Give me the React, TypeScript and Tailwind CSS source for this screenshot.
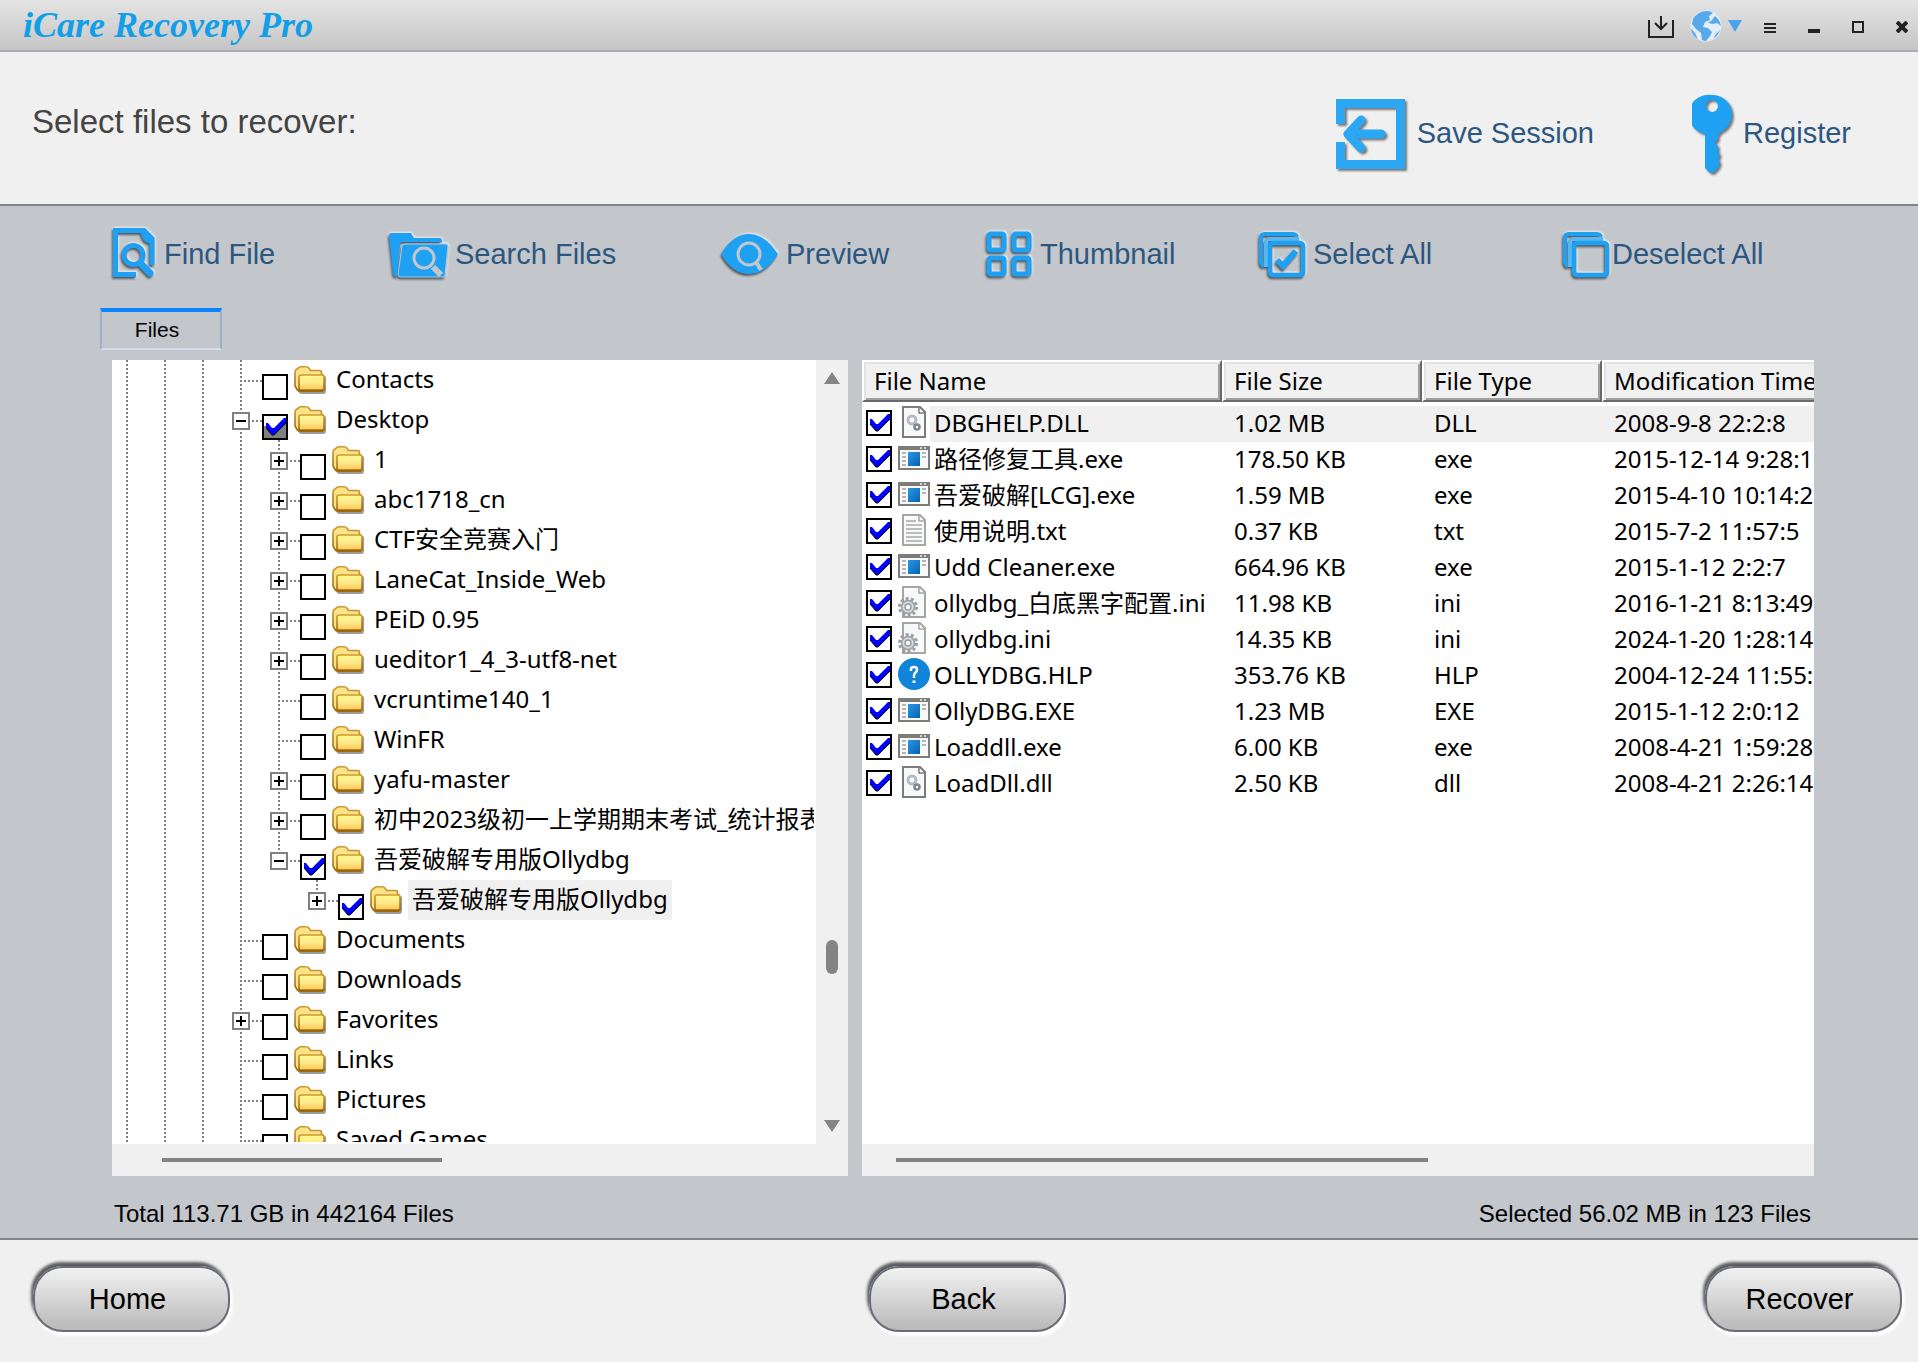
import { ReactNode } from "react";

type TreeNode = {
  name: string;
  depth: number; // 0 = user folder level
  expander?: "+" | "-";
  check?: "on" | "partial";
  last?: boolean; // last child of its parent
  selected?: boolean;
};

const tree: TreeNode[] = [
  { name: "Contacts", depth: 0 },
  { name: "Desktop", depth: 0, expander: "-", check: "partial" },
  { name: "1", depth: 1, expander: "+" },
  { name: "abc1718_cn", depth: 1, expander: "+" },
  { name: "CTF安全竞赛入门", depth: 1, expander: "+" },
  { name: "LaneCat_Inside_Web", depth: 1, expander: "+" },
  { name: "PEiD 0.95", depth: 1, expander: "+" },
  { name: "ueditor1_4_3-utf8-net", depth: 1, expander: "+" },
  { name: "vcruntime140_1", depth: 1 },
  { name: "WinFR", depth: 1 },
  { name: "yafu-master", depth: 1, expander: "+" },
  { name: "初中2023级初一上学期期末考试_统计报表", depth: 1, expander: "+" },
  { name: "吾爱破解专用版Ollydbg", depth: 1, expander: "-", check: "on", last: true },
  { name: "吾爱破解专用版Ollydbg", depth: 2, expander: "+", check: "on", last: true, selected: true },
  { name: "Documents", depth: 0 },
  { name: "Downloads", depth: 0 },
  { name: "Favorites", depth: 0, expander: "+" },
  { name: "Links", depth: 0 },
  { name: "Pictures", depth: 0 },
  { name: "Saved Games", depth: 0 },
];

type FileKind = "dll" | "exe" | "txt" | "ini" | "hlp";

const files: { name: string; size: string; type: string; time: string; kind: FileKind }[] = [
  { name: "DBGHELP.DLL", size: "1.02 MB", type: "DLL", time: "2008-9-8 22:2:8", kind: "dll" },
  { name: "路径修复工具.exe", size: "178.50 KB", type: "exe", time: "2015-12-14 9:28:11", kind: "exe" },
  { name: "吾爱破解[LCG].exe", size: "1.59 MB", type: "exe", time: "2015-4-10 10:14:22", kind: "exe" },
  { name: "使用说明.txt", size: "0.37 KB", type: "txt", time: "2015-7-2 11:57:5", kind: "txt" },
  { name: "Udd Cleaner.exe", size: "664.96 KB", type: "exe", time: "2015-1-12 2:2:7", kind: "exe" },
  { name: "ollydbg_白底黑字配置.ini", size: "11.98 KB", type: "ini", time: "2016-1-21 8:13:49", kind: "ini" },
  { name: "ollydbg.ini", size: "14.35 KB", type: "ini", time: "2024-1-20 1:28:14", kind: "ini" },
  { name: "OLLYDBG.HLP", size: "353.76 KB", type: "HLP", time: "2004-12-24 11:55:10", kind: "hlp" },
  { name: "OllyDBG.EXE", size: "1.23 MB", type: "EXE", time: "2015-1-12 2:0:12", kind: "exe" },
  { name: "Loaddll.exe", size: "6.00 KB", type: "exe", time: "2008-4-21 1:59:28", kind: "exe" },
  { name: "LoadDll.dll", size: "2.50 KB", type: "dll", time: "2008-4-21 2:26:14", kind: "dll" },
];

const BLUE = "#1ea1f3";

const CheckBox = ({ label, state }: { label: string; state?: "on" | "partial" }) => (
  <span className="relative block h-[26px] w-[26px] shrink-0">
    <input
      type="checkbox"
      aria-label={label}
      defaultChecked={!!state}
      className="peer block h-[26px] w-[26px] appearance-none border-2 border-black bg-white"
    />
    <svg
      viewBox="0 0 26 26"
      className="pointer-events-none absolute inset-0 hidden h-[26px] w-[26px] peer-checked:block"
    >
      {state === "partial" && <path d="M2 12h2l7 8 13-12v16H2z" fill="#808080" />}
      <path d="M4 9h2l4 5h2L22 4h2v5L12 21h-2l-6-7z" fill="#00f" />
      <path d="M4 14l6 7h2L24 9" fill="none" stroke="#000" strokeWidth="1" />
    </svg>
  </span>
);

const Folder = () => (
  <svg viewBox="0 0 32 29" className="h-[29px] w-8 shrink-0">
    <defs>
      <linearGradient id="folderFront" x1="0" y1="0" x2="0" y2="1">
        <stop offset="0" stopColor="#fffa90" />
        <stop offset="0.5" stopColor="#ffe98a" />
        <stop offset="1" stopColor="#fbc050" />
      </linearGradient>
      <linearGradient id="folderEdge" x1="0" y1="0" x2="0" y2="1">
        <stop offset="0" stopColor="#cf9a35" />
        <stop offset="1" stopColor="#9a6608" />
      </linearGradient>
    </defs>
    <path d="M4 23h25V9l3 2v14q0 3-3 3H8q-3 0-4-3z" fill="#666" opacity="0.65" />
    <path
      d="M1 20V6q0-2 2-3l2-1.500q1-.7 2-.7h5q2 0 3 1.500l1.500 2.200h9q2 0 2 2V9h1.500v14q0 2-2 2H6q-2 0-3-1.500z"
      fill="#fbe488"
      stroke="url(#folderEdge)"
      strokeWidth="1.600"
    />
    <path
      d="M5 11q0-2 2-2h21q2 0 2 2v12q0 1.500-2 1.500H7q-2 0-2-2z"
      fill="url(#folderFront)"
      stroke="url(#folderEdge)"
      strokeWidth="1.600"
    />
    <path d="M6 24.500h23" stroke="#9a6400" strokeWidth="2" />
  </svg>
);

const FileIcon = ({ kind }: { kind: FileKind }) => {
  if (kind === "exe") {
    return (
      <svg viewBox="0 0 32 32" className="h-8 w-8 shrink-0">
        <defs>
          <linearGradient id="exeBlue" x1="0" y1="0" x2="1" y2="1">
            <stop offset="0" stopColor="#2a9ae4" />
            <stop offset="1" stopColor="#0560b4" />
          </linearGradient>
        </defs>
        <rect x="1" y="5" width="30" height="22" fill="#f8f8f8" stroke="#7c7c78" strokeWidth="2" />
        <path d="M0 6h32" stroke="#7c7c78" strokeWidth="4" />
        <path d="M22 6h2m2 0h2" stroke="#d8d8d8" strokeWidth="2" />
        <rect x="10" y="10" width="12" height="14" fill="url(#exeBlue)" />
        <path d="M4 11h4M4 15h4M4 19h4M4 23h4M24 11h4M24 15h4" stroke="#a0a0a0" strokeWidth="1.500" />
      </svg>
    );
  }
  if (kind === "hlp") {
    return (
      <svg viewBox="0 0 32 32" className="h-8 w-8 shrink-0">
        <circle cx="16" cy="16" r="16" fill="#0f84d8" />
        <path d="M13 13v-2q0-2 3-2t3 2.500q0 2-1.500 3T16 18v2" fill="none" stroke="#fff" strokeWidth="2.500" />
        <path d="M14.500 22.500h3v2.500h-3z" fill="#fff" />
      </svg>
    );
  }
  const edge = kind === "dll" ? "#7c7c78" : "#a6a6a4";
  return (
    <svg viewBox="0 0 32 32" className="h-8 w-8 shrink-0">
      <path d="M5 1h17l5 5v25H5z" fill="#f8f9fa" stroke={edge} strokeWidth="2" />
      <path d="M21 1v6h6" fill="none" stroke={edge} strokeWidth="1.500" />
      {kind === "txt" && (
        <path d="M8 7h10M8 11h16M8 15h16M8 19h16M8 23h16M8 27h16" stroke="#a8a8a8" strokeWidth="1.500" />
      )}
      {kind === "dll" && (
        <g fill="none">
          <circle cx="14" cy="14" r="4" stroke="#b4bcc6" strokeWidth="3" />
          <circle cx="19" cy="21" r="2.500" stroke="#7d8790" strokeWidth="2.500" />
        </g>
      )}
      {kind === "ini" && (
        <g fill="none">
          <circle cx="10" cy="21" r="8.500" stroke="#9a9fa3" strokeWidth="3" strokeDasharray="3 2.340" />
          <circle cx="10" cy="21" r="6.500" fill="#d5d9dc" stroke="#9a9fa3" strokeWidth="1.500" />
          <circle cx="10" cy="21" r="3" fill="#f8f9fa" stroke="#9a9fa3" strokeWidth="1.500" />
        </g>
      )}
    </svg>
  );
};

const Dots = ({ half }: { half?: boolean }) => (
  <span
    className={
      (half ? "h-5 " : "h-10 ") +
      "block w-[2px] bg-[repeating-linear-gradient(to_bottom,#808080_0_2px,transparent_2px_4px)]"
    }
  />
);

const TreeRow = ({ node }: { node: TreeNode }) => {
  // three outer guides, one more for every parent that still has siblings below
  const guides = [true, true, true];
  for (let i = 0; i < node.depth; i++) guides.push(i === 0);

  return (
    <li className="-ml-1 flex h-10 w-max">
      {guides.map((visible, i) => (
        <span key={i} className="flex w-[38px] shrink-0 justify-center">
          {visible && <Dots />}
        </span>
      ))}
      <span className="relative flex w-10 shrink-0 pl-[18px]">
        <Dots half={node.last} />
        <span className="mt-5 h-[2px] flex-1 bg-[repeating-linear-gradient(to_right,transparent_0_2px,#808080_2px_4px)]" />
        {node.expander && (
          <button
            aria-label={node.expander === "+" ? "Expand" : "Collapse"}
            className="absolute top-3 left-[10px] h-[18px] w-[18px] border-2 border-[#808080] bg-white"
          >
            <svg viewBox="0 0 14 14" className="h-[14px] w-[14px]">
              <path d={node.expander === "+" ? "M2 7h10M7 2v10" : "M2 7h10"} stroke="#000" strokeWidth="2" />
            </svg>
          </button>
        )}
      </span>
      <span className="mr-[6px] pt-[14px]">
        <CheckBox label={node.name} state={node.check} />
      </span>
      <span className="mr-[6px] pt-[6px]">
        <Folder />
      </span>
      <span className={(node.selected ? "bg-[#f0f0f0] " : "") + "h-10 px-1 leading-[38px] whitespace-nowrap"}>
        {node.name}
      </span>
    </li>
  );
};

const ToolButton = ({ label, children }: { label: string; children: ReactNode }) => (
  <button className="flex items-center gap-px text-left text-[29px] leading-9 whitespace-nowrap text-[#2b5780]">
    {children}
    {label}
  </button>
);

const toolIcon =
  "h-14 shrink-0 [filter:drop-shadow(-1px_2px_1px_#4f5459)_drop-shadow(1px_-1px_1px_#eceef0)]";

const Toolbar = () => (
  <div className="-ml-px grid grid-cols-[277fr_332fr_266fr_272fr_304fr_252fr]">
    <ToolButton label="Find File">
      <svg viewBox="0 0 52 56" className={"w-[52px] " + toolIcon} fill="none" stroke={BLUE}>
        <path d="M25 48.500H4.500V4.500H33l8 8V39" strokeWidth="5" />
        <path d="M28 3h6l9 9v6q-10 0-12-7z" fill={BLUE} stroke="none" />
        <circle cx="22.500" cy="29" r="9.500" strokeWidth="5" />
        <path d="M31 39l8 8" strokeWidth="7" strokeLinecap="round" />
      </svg>
    </ToolButton>
    <ToolButton label="Search Files">
      <svg viewBox="0 0 66 56" className={"w-[66px] " + toolIcon}>
        <path d="M1 10q0-3 3-3h19l3 5h26q2 0 2 4H15q-3 0-3 3L9 51q-3 0-4-3z" fill={BLUE} />
        <path
          d="M14 20q0-2 3-2h41q2 0 2 2l-3 29q0 2-2 2H13q-3 0-3-2z"
          fill={BLUE}
          stroke="#a9cfe9"
          strokeWidth="1"
        />
        <circle cx="36" cy="32" r="10" fill="none" stroke="#c3c6cb" strokeWidth="3" />
        <path d="M45 41l8 8" stroke="#c3c6cb" strokeWidth="6" />
      </svg>
    </ToolButton>
    <ToolButton label="Preview">
      <svg viewBox="0 0 65 56" className={"w-[65px] " + toolIcon}>
        <path d="M1 28Q13 8 29 8t29 20Q46 48 29 48T1 28z" fill={BLUE} />
        <circle cx="29" cy="28" r="11" fill="none" stroke="#c3c6cb" strokeWidth="3" />
        <path d="M36 36l5 8" stroke="#c3c6cb" strokeWidth="4" />
      </svg>
    </ToolButton>
    <ToolButton label="Thumbnail">
      <svg viewBox="0 0 53 56" className={"w-[53px] " + toolIcon} fill="none" stroke={BLUE} strokeWidth="5">
        <rect x="3" y="8" width="15" height="16" rx="2" />
        <rect x="28" y="8" width="15" height="16" rx="2" />
        <rect x="3" y="32" width="15" height="16" rx="2" />
        <rect x="28" y="32" width="15" height="16" rx="2" />
      </svg>
    </ToolButton>
    <ToolButton label="Select All">
      <svg viewBox="0 0 54 56" className={"w-[54px] " + toolIcon} fill="none" stroke={BLUE}>
        <path d="M6 40q-3-1-3-5V12q0-4 4-4h27q4 0 5 3" strokeWidth="4" />
        <path d="M8 41V17q0-4 4-4h29" stroke="#58b6f0" strokeWidth="4" />
        <rect x="12" y="17" width="33" height="32" rx="3" strokeWidth="4.500" />
        <path d="M19 34l6 6 13-15" strokeWidth="6" />
      </svg>
    </ToolButton>
    <ToolButton label="Deselect All">
      <svg viewBox="0 0 49 56" className={"w-[49px] " + toolIcon} fill="none" stroke={BLUE}>
        <path d="M6 40q-3-1-3-5V12q0-4 4-4h27q4 0 5 3" strokeWidth="4" />
        <path d="M8 41V17q0-4 4-4h29" stroke="#58b6f0" strokeWidth="4" />
        <rect x="12" y="17" width="33" height="32" rx="3" strokeWidth="4.500" />
      </svg>
    </ToolButton>
  </div>
);

const TitleBar = () => (
  <header className="flex h-[52px] shrink-0 items-center border-b-2 border-[#a9adb3] bg-linear-to-b from-[#e4e4e4] to-[#c6c6c6] pr-[10px] pl-[23px]">
    <h1 className="flex-1 font-['Liberation_Serif',serif] text-[36px] leading-10 font-bold text-[#129fe8] italic">
      iCare Recovery Pro
    </h1>
    <button aria-label="Import" className="mr-4 pt-1">
      <svg viewBox="0 0 26 24" className="h-6 w-[26px]" fill="none" stroke="#222" strokeWidth="2">
        <path d="M1 5v17h24V5M13 1v12M7 8l6 6 6-6" />
      </svg>
    </button>
    <button aria-label="Language" className="mr-[22px] flex items-center gap-[6px] pt-[2px]">
      <svg viewBox="0 0 32 32" className="h-8 w-8">
        <circle cx="16" cy="16" r="15.500" fill="#e3eef8" />
        <path d="M3 9Q8 1 17 1q4 0 6 2l-4 3 1 4-5 2-2 5 5 1 4 4-2 4-4 5q-2 0-4-1l-1-7-5-4-4-5z" fill="#58a8ec" />
        <path d="M18 13l4-3 3-4q5 4 6 10l-4-3-4 1z" fill="#58a8ec" />
        <path d="M23 29l3-5 4-4q-2 6-7 9zM1 18l4 5 3 6q-6-3-7-11z" fill="#58a8ec" />
      </svg>
      <svg viewBox="0 0 14 12" className="h-3 w-[14px]">
        <path d="M0 0h14L7 12z" fill="#4ba3ea" />
      </svg>
    </button>
    <div className="flex items-center gap-8 pt-1">
      <button aria-label="Menu" className="pt-[2px]">
        <svg viewBox="0 0 12 12" className="h-3 w-3" stroke="#222" strokeWidth="2">
          <path d="M0 2h12M0 6h12M0 10h12" />
        </svg>
      </button>
      <button aria-label="Minimize">
        <svg viewBox="0 0 12 12" className="h-3 w-3" stroke="#222" strokeWidth="4">
          <path d="M0 10h12" />
        </svg>
      </button>
      <button aria-label="Maximize">
        <svg viewBox="0 0 12 12" className="h-3 w-3" fill="none" stroke="#222" strokeWidth="2">
          <path d="M1 1h10v10H1z" />
        </svg>
      </button>
      <button aria-label="Close">
        <svg viewBox="0 0 12 12" className="h-3 w-3" stroke="#222" strokeWidth="4">
          <path d="M1 1l10 10M11 1L1 11" />
        </svg>
      </button>
    </div>
  </header>
);

const PageHeader = () => (
  <section className="flex h-[154px] shrink-0 justify-between border-b-2 border-[#808387] bg-[#f0f0f0] pr-[67px] pl-8">
    <h2 className="pt-[52px] text-[33px] leading-9 text-[#444]">Select files to recover:</h2>
    <div className="flex items-center gap-[98px] pt-3">
      <button className="flex items-center gap-[11px] text-[29px] text-[#2b5780]">
        <svg
          viewBox="0 0 70 72"
          className="h-[72px] w-[70px] [filter:drop-shadow(2px_2px_1px_#777)]"
          fill="none"
          stroke="#2ba7f3"
        >
          <path d="M4.500 26V5.500h60v61h-60V44" strokeWidth="9" />
          <path d="M45 36H14M25 22L12 36l13 14" strokeWidth="9" strokeLinecap="round" strokeLinejoin="round" />
        </svg>
        Save Session
      </button>
      <button className="flex items-center gap-[11px] text-[29px] text-[#2b5780]">
        <svg viewBox="0 0 40 80" className="h-20 w-10 [filter:drop-shadow(2px_2px_1px_#777)]">
          <path
            d="M20 1a19.500 19.500 0 0 1 9 37l-3 3v4l-3 4 3 3v6l2 3-2 4 2 4-2 5-5 5h-3l-5-5V40A19.500 19.500 0 0 1 20 1zm0 5a6 6 0 1 0 0 12 6 6 0 0 0 0-12z"
            fill={BLUE}
            fillRule="evenodd"
          />
        </svg>
        Register
      </button>
    </div>
  </section>
);

const TreePanel = () => (
  <div className="flex min-w-0 flex-[736] flex-col bg-[#f0f0f0] font-['Noto_Sans','Noto_Sans_CJK_SC',sans-serif] text-2xl text-black">
    <div className="flex min-h-0 flex-1">
      <ul className="min-w-0 flex-1 overflow-hidden border-r-2 border-b-2 border-white bg-white">
        {tree.map((node, i) => (
          <TreeRow key={i} node={node} />
        ))}
      </ul>
      <div className="flex w-8 flex-col items-center justify-between py-3">
        <svg viewBox="0 0 16 12" className="h-3 w-4">
          <path d="M8 0l8 12H0z" fill="#858585" />
        </svg>
        <div className="flex flex-1 flex-col items-center">
          <div className="flex-[556]" />
          <div className="h-[34px] w-3 rounded-full bg-[#858585]" />
          <div className="flex-[146]" />
        </div>
        <svg viewBox="0 0 16 12" className="h-3 w-4">
          <path d="M0 0h16L8 12z" fill="#858585" />
        </svg>
      </div>
    </div>
    <div className="h-8 px-[50px] pt-[14px]">
      <div className="h-1 w-[280px] bg-[#858585]" />
    </div>
  </div>
);

const FilePanel = () => (
  <div className="flex min-w-0 flex-[952] flex-col bg-white font-['Noto_Sans','Noto_Sans_CJK_SC',sans-serif] text-2xl text-black">
    <div className="min-h-0 flex-1 overflow-hidden">
      <table className="w-[1000px] table-fixed">
        <colgroup>
          <col className="w-[360px]" />
          <col className="w-[200px]" />
          <col className="w-[180px]" />
          <col />
        </colgroup>
        <thead>
          <tr>
            {["File Name", "File Size", "File Type", "Modification Time"].map((title) => (
              <th key={title} className="p-0 pb-1 text-left font-normal">
                <div className="h-[42px] border-2 border-t-white border-r-[#696969] border-b-[#696969] border-l-white bg-[#f0f0f0] pl-[10px] leading-[38px] whitespace-nowrap shadow-[inset_2px_2px_0_#e3e3e3,inset_-2px_-2px_0_#a0a0a0]">
                  {title}
                </div>
              </th>
            ))}
          </tr>
        </thead>
        <tbody>
          {files.map((file, i) => {
            const bg = i === 0 ? "bg-[#f0f0f0] " : "";
            return (
              <tr key={file.name} className="h-9">
                <td className="p-0">
                  <div className="flex h-9 pl-1">
                    <span className="mr-[6px] pt-1">
                      <CheckBox label={file.name} state="on" />
                    </span>
                    <FileIcon kind={file.kind} />
                    <span className={bg + "h-9 flex-1 pl-1 leading-[34px] whitespace-nowrap"}>{file.name}</span>
                  </div>
                </td>
                {[file.size, file.type, file.time].map((text, j) => (
                  <td key={j} className={bg + "p-0"}>
                    <div className="h-9 pl-3 leading-[34px] whitespace-nowrap">{text}</div>
                  </td>
                ))}
              </tr>
            );
          })}
        </tbody>
      </table>
    </div>
    <div className="h-8 bg-[#f0f0f0] px-[34px] pt-[14px]">
      <div className="h-1 w-[532px] bg-[#858585]" />
    </div>
  </div>
);

const PillButton = ({ label }: { label: string }) => (
  <button className="h-[66px] w-[197px] rounded-[30px] border-2 border-[#6a6d77] bg-linear-to-b from-[#f2f2f2] to-[#b9b9b9] pt-[2px] pr-2 text-[29px] text-black shadow-[-2px_-4px_3px_0px_#5b5c60,2px_3px_3px_1px_#fff]">
    {label}
  </button>
);

const App = () => {
  return (
    <div className="flex h-screen flex-col bg-[#c3c6cb] font-['Liberation_Sans','Noto_Sans_CJK_SC',sans-serif]">
      <TitleBar />
      <PageHeader />
      <main className="flex min-h-0 flex-1 flex-col pt-5 pr-[104px] pl-[112px]">
        <Toolbar />
        <div role="tablist" className="-ml-3 pt-[26px] pb-[10px]">
          <button
            role="tab"
            aria-selected="true"
            className="block h-[42px] w-[122px] border-2 border-t-4 border-t-[#0a84ff] border-r-[#9fb0cb] border-b-[#cfdcee] border-l-[#9fb0cb] pr-2 text-[21px] text-black"
          >
            Files
          </button>
        </div>
        <div className="flex min-h-0 flex-1 gap-[14px]">
          <TreePanel />
          <FilePanel />
        </div>
        <div className="flex h-[62px] shrink-0 justify-between pt-[22px] pr-[3px] pl-[2px] text-2xl text-black">
          <p>Total 113.71 GB in 442164 Files</p>
          <p>Selected 56.02 MB in 123 Files</p>
        </div>
      </main>
      <footer className="flex h-[124px] shrink-0 items-start justify-between border-t-2 border-[#808387] bg-[#f0f0f0] pt-[26px] pr-4 pl-[33px]">
        <PillButton label="Home" />
        <PillButton label="Back" />
        <PillButton label="Recover" />
      </footer>
    </div>
  );
};

export default App;
